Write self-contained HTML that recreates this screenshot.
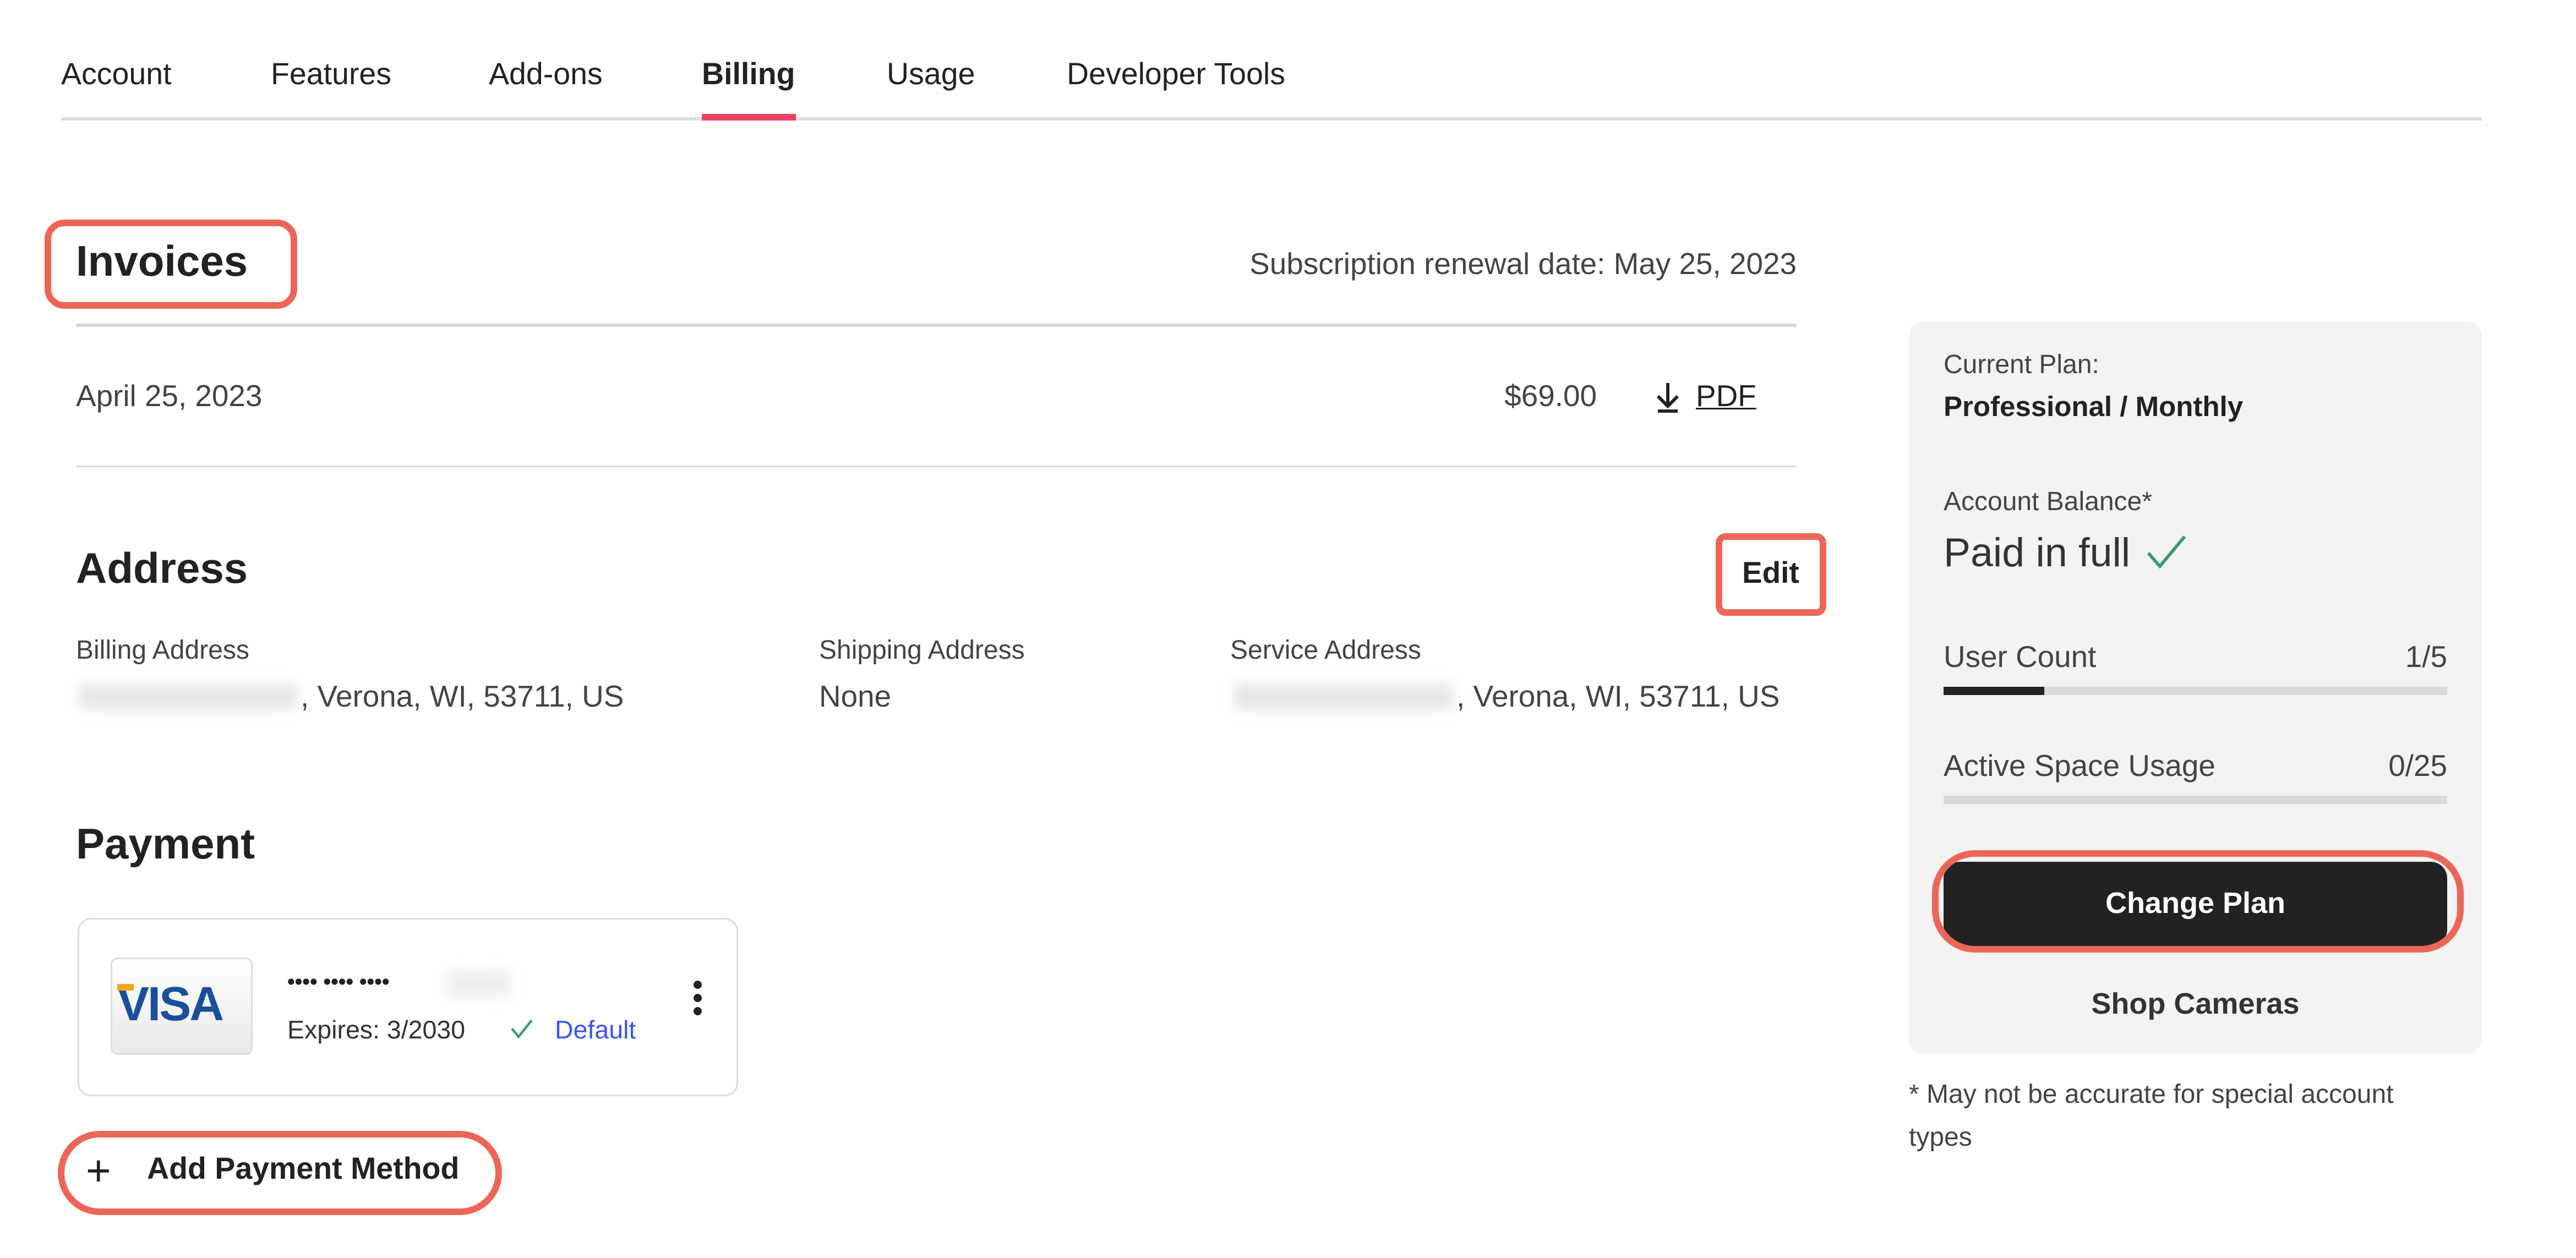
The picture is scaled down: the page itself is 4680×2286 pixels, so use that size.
<!DOCTYPE html>
<html><head><meta charset="utf-8"><style>
html,body{margin:0;padding:0;background:#fff;}
body{width:4680px;height:2284px;overflow:hidden;position:relative;}
#w{position:absolute;left:0;top:0;width:1560px;height:762px;transform:scale(3);transform-origin:0 0;font-family:"Liberation Sans",sans-serif;color:#333;}
.a{position:absolute;white-space:nowrap;}
.t{font-size:18.5px;color:#222;line-height:22px;top:34px;}
.h{font-size:26px;font-weight:bold;color:#222;line-height:30px;}
.lbl{font-size:16px;color:#444;line-height:18px;}
.val{font-size:18.3px;color:#444;line-height:20px;}
.blur{position:absolute;background:#e6e6e6;filter:blur(4px);border-radius:4px;}
.ring{position:absolute;border:4px solid #ec6657;box-sizing:border-box;}
</style></head><body><div id="w">
<div class="a t" style="left:37px">Account</div>
<div class="a t" style="left:164px">Features</div>
<div class="a t" style="left:296px">Add-ons</div>
<div class="a t" style="left:425px;font-weight:bold">Billing</div>
<div class="a t" style="left:537px">Usage</div>
<div class="a t" style="left:646px">Developer Tools</div>
<div class="a" style="left:37px;top:71px;width:1466px;height:2px;background:#ddd"></div>
<div class="a" style="left:425px;top:69px;width:57px;height:4px;background:#e84260"></div>

<div class="ring" style="left:27px;top:133px;width:153px;height:54px;border-radius:12px"></div>
<div class="a h" style="left:46px;top:143px">Invoices</div>
<div class="a val" style="right:472px;top:150px;color:#444">Subscription renewal date: May 25, 2023</div>
<div class="a" style="left:46px;top:196px;width:1042px;height:2px;background:#d8d8d8"></div>
<div class="a val" style="left:46px;top:230px">April 25, 2023</div>
<div class="a val" style="right:593px;top:230px">$69.00</div>
<svg class="a" style="left:1002px;top:231px" width="16" height="19" viewBox="0 0 16 19"><path d="M8 1v13M2 9l6 6 6-6M2 18h12" stroke="#222" stroke-width="2" fill="none"/></svg>
<div class="a val" style="left:1027px;top:230px;color:#222;text-decoration:underline">PDF</div>
<div class="a" style="left:46px;top:282px;width:1042px;height:1px;background:#d8d8d8"></div>

<div class="a h" style="left:46px;top:329px">Address</div>
<div class="ring" style="left:1039px;top:323px;width:67px;height:50px;border-radius:6px"></div>
<div class="a val" style="left:1055px;top:337px;font-weight:bold;color:#222">Edit</div>
<div class="a lbl" style="left:46px;top:386px">Billing Address</div>
<div class="blur" style="left:48px;top:414px;width:132px;height:16px"></div>
<div class="a val" style="left:182px;top:412px">, Verona, WI, 53711, US</div>
<div class="a lbl" style="left:496px;top:386px">Shipping Address</div>
<div class="a val" style="left:496px;top:412px">None</div>
<div class="a lbl" style="left:745px;top:386px">Service Address</div>
<div class="blur" style="left:747px;top:414px;width:133px;height:16px"></div>
<div class="a val" style="left:882px;top:412px">, Verona, WI, 53711, US</div>

<div class="a h" style="left:46px;top:496px">Payment</div>
<div class="a" style="left:47px;top:556px;width:400px;height:108px;border:1px solid #ddd;border-radius:8px;box-sizing:border-box"></div>
<div class="a" style="left:67px;top:580px;width:86px;height:59px;border:1px solid #ddd;border-radius:4px;box-sizing:border-box;background:linear-gradient(#fff,#e9e9e9)"></div>
<div class="a" style="left:71px;top:593px;font-size:29px;font-weight:bold;color:#1a4f9c;letter-spacing:-1px;line-height:32px">VISA</div>
<div class="a" style="left:71px;top:596px;width:10px;height:4px;background:#f2a91e"></div>
<div class="a" style="left:174px;top:587px;font-size:13px;color:#222;line-height:16px;font-weight:bold">&bull;&bull;&bull;&bull; &bull;&bull;&bull;&bull; &bull;&bull;&bull;&bull;</div>
<div class="blur" style="left:270px;top:588px;width:40px;height:16px;background:#eee"></div>
<div class="a" style="left:174px;top:616px;font-size:15.5px;color:#333;line-height:18px">Expires: 3/2030</div>
<svg class="a" style="left:309px;top:617px" width="14" height="12" viewBox="0 0 14 12"><path d="M1 6l4 5 8-10" stroke="#3a9c6e" stroke-width="1.5" fill="none"/></svg>
<div class="a" style="left:336px;top:616px;font-size:15.5px;color:#3a55f0;line-height:18px">Default</div>
<div class="a" style="left:420px;top:594px;width:5px;height:5px;border-radius:50%;background:#222;box-shadow:0 8px 0 #222,0 16px 0 #222"></div>

<div class="ring" style="left:35px;top:685px;width:269px;height:51px;border-radius:26px"></div>
<div class="a" style="left:52px;top:697px;font-size:26px;line-height:24px;color:#222">+</div>
<div class="a" style="left:89px;top:698px;font-size:18.5px;font-weight:bold;color:#222;line-height:20px">Add Payment Method</div>

<div class="a" style="left:1156px;top:195px;width:347px;height:443px;background:#f4f3f2;border-radius:8px"></div>
<div class="a lbl" style="left:1177px;top:213px">Current Plan:</div>
<div class="a" style="left:1177px;top:237px;font-size:17px;font-weight:bold;color:#222;line-height:20px">Professional / Monthly</div>
<div class="a lbl" style="left:1177px;top:296px">Account Balance*</div>
<div class="a" style="left:1177px;top:322px;font-size:24.5px;color:#333;line-height:28px">Paid in full</div>
<svg class="a" style="left:1299px;top:323px" width="26" height="22" viewBox="0 0 26 22"><path d="M2 12l7 8L24 2" stroke="#3a9c6e" stroke-width="2" fill="none"/></svg>
<div class="a val" style="left:1177px;top:388px">User Count</div>
<div class="a val" style="right:78px;top:388px">1/5</div>
<div class="a" style="left:1177px;top:416px;width:305px;height:5px;background:#d9d9d9"></div>
<div class="a" style="left:1177px;top:416px;width:61px;height:5px;background:#222"></div>
<div class="a val" style="left:1177px;top:454px">Active Space Usage</div>
<div class="a val" style="right:78px;top:454px">0/25</div>
<div class="a" style="left:1177px;top:482px;width:305px;height:5px;background:#d9d9d9"></div>
<div class="a" style="left:1177px;top:522px;width:305px;height:51px;background:#222;border-radius:10px"></div>
<div class="ring" style="left:1170px;top:515px;width:322px;height:62px;border-radius:26px"></div>
<div class="a" style="left:1177px;top:537px;width:305px;text-align:center;font-size:18px;font-weight:bold;color:#fff;line-height:20px">Change Plan</div>
<div class="a" style="left:1156px;top:598px;width:347px;text-align:center;font-size:18px;font-weight:bold;color:#333;line-height:20px">Shop Cameras</div>
<div class="a lbl" style="left:1156px;top:651px;line-height:26px;white-space:normal;width:320px">* May not be accurate for special account types</div>
</div></body></html>
